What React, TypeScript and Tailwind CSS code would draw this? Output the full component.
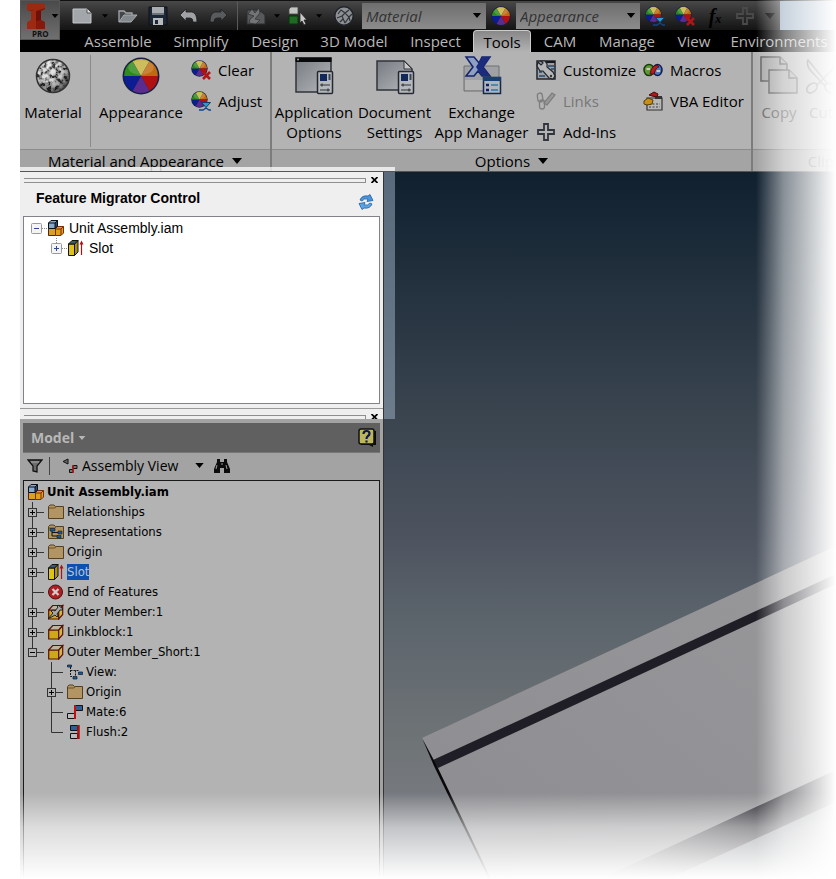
import { useState } from "react";
import type { ReactNode } from "react";

interface IconProps {
  className?: string;
}

interface TreeNode {
  label: string;
  icon: ReactNode;
  state?: "plus" | "minus";
  selected?: boolean;
  children?: TreeNode[];
}

/* ---------- icons ---------- */

function Caret({ className = "w-2.5 h-1.5" }: IconProps) {
  return (
    <svg viewBox="0 0 10 6" className={`shrink-0 ${className}`} fill="currentColor">
      <path d="M0 0h10L5 6z" />
    </svg>
  );
}

function WheelShape() {
  return (
    <>
      <circle cx="18" cy="18" r="17.5" fill="#15203f" />
      <path d="M18 18 10 4.1A16 16 0 0 1 26 4.1z" fill="#c3b23f" />
      <path d="M18 18 26 4.1A16 16 0 0 1 34 18z" fill="#c06a10" />
      <path d="M18 18H34A16 16 0 0 1 26 31.9z" fill="#b01010" />
      <path d="M18 18 26 31.9A16 16 0 0 1 10 31.9z" fill="#5a2c90" />
      <path d="M18 18 10 31.9A16 16 0 0 1 2 18z" fill="#0c1d94" />
      <path d="M18 18H2A16 16 0 0 1 10 4.1z" fill="#2f8a1c" />
      <ellipse cx="18" cy="10" rx="12" ry="7" fill="#fff" opacity=".16" />
    </>
  );
}

function WheelIcon({ className = "w-5 h-5" }: IconProps) {
  return (
    <svg viewBox="0 0 36 36" className={`shrink-0 ${className}`}>
      <WheelShape />
    </svg>
  );
}

function WheelClearIcon() {
  return (
    <svg viewBox="0 0 20 20" className="w-5 h-5 shrink-0">
      <g transform="scale(.47)">
        <WheelShape />
      </g>
      <path d="m12 12 7 7M19 12l-7 7" stroke="#b01414" strokeWidth="2.600" />
    </svg>
  );
}

function WheelAdjustIcon() {
  return (
    <svg viewBox="0 0 20 20" className="w-5 h-5 shrink-0">
      <g transform="scale(.47)">
        <WheelShape />
      </g>
      <path d="M10.500 11.500h9l-4.500 5z" fill="#2a9ad0" stroke="#0b3f70" />
      <path d="M8 19h4l3-2 3 2h2" fill="none" stroke="#12458a" strokeWidth="1.400" />
    </svg>
  );
}

function MaterialIcon({ className = "w-9 h-9" }: IconProps) {
  return (
    <svg viewBox="0 0 36 36" className={`shrink-0 ${className}`}>
      <defs>
        <clipPath id="ball">
          <circle cx="18" cy="18" r="16.5" />
        </clipPath>
        <radialGradient id="ballShade" cx="35%" cy="28%" r="75%">
          <stop offset="0" stopColor="#ddd" stopOpacity=".4" />
          <stop offset=".5" stopColor="#777" stopOpacity=".3" />
          <stop offset="1" stopColor="#000" stopOpacity=".75" />
        </radialGradient>
        <filter id="marble" x="0" y="0" width="100%" height="100%">
          <feTurbulence type="fractalNoise" baseFrequency=".24" numOctaves="3" seed="4" />
          <feColorMatrix values="3 0 0 0 -1.05  3 0 0 0 -1.05  3 0 0 0 -1.05  0 0 0 0 1" />
        </filter>
      </defs>
      <g clipPath="url(#ball)">
        <rect width="36" height="36" fill="#888" filter="url(#marble)" />
        <rect width="36" height="36" fill="url(#ballShade)" />
      </g>
      <circle cx="18" cy="18" r="16.5" fill="none" stroke="#333" strokeWidth="1.500" />
    </svg>
  );
}

function GlobeIcon() {
  return (
    <svg viewBox="0 0 20 20" className="w-5 h-5 shrink-0">
      <circle cx="10" cy="10" r="9.2" fill="#8d9196" stroke="#20242a" strokeWidth="1.500" />
      <path
        d="m4 8 3-4 4 3 4-3M3 12l5-2 3 7M8 10l3-3 4 4-4 6M15 11l3-3M6 16l3-3M15 11l1 4"
        stroke="#30353a"
        strokeWidth="1.200"
        fill="none"
      />
    </svg>
  );
}

function LogoIcon() {
  return (
    <svg viewBox="0 0 18 26" className="w-[18px] h-[26px]">
      <path d="M0 1 4 0h14v6l-4 2v10l4 1v7H0v-7l4-2V8L0 7z" fill="#9c2a12" />
      <path d="M9 8h5v10H9z" fill="#6e0f08" />
      <path d="M0 7l4 1h10l4-2v-1L9 8z" fill="#7a160b" />
      <path d="M9 18l5-1 4 2v7H9z" fill="#84190c" />
    </svg>
  );
}

function NewIcon() {
  return (
    <svg viewBox="0 0 20 16" className="w-5 h-4">
      <path d="M1 1h14l4 4v10H1z" fill="#a3a6aa" stroke="#c4c6c8" />
      <path d="M15 1v4h4" fill="#e0e0e0" stroke="#555" />
    </svg>
  );
}

function OpenIcon() {
  return (
    <svg viewBox="0 0 20 14" className="w-5 h-3.5">
      <path d="M1 13V2h5l2 2h6v2" fill="#43474c" stroke="#a4a8ac" strokeWidth="1.300" />
      <path d="m1 13 5-7h13l-6 7z" fill="#84898e" stroke="#a8acb0" />
    </svg>
  );
}

function SaveIcon() {
  return (
    <svg viewBox="0 0 20 20" className="w-5 h-5">
      <path d="M1 1h18v18H1z" fill="#1c2735" stroke="#0d1118" />
      <path d="M4 1h12v8H4z" fill="#a9acb0" />
      <path d="M5 12h10v7H5z" fill="#b8babd" />
      <path d="M7 14h3v4H7z" fill="#1c2735" />
      <path d="M4 7h12v2H4z" fill="#6d7278" />
    </svg>
  );
}

function UndoIcon({ className = "" }: IconProps) {
  return (
    <svg viewBox="0 0 19 14" className={`w-[19px] h-3.5 ${className}`}>
      <path d="M7 0v3h6q5 1 5 10h-4q0-4-3-4H7v3L1 6z" fill="currentColor" stroke="#1d2024" strokeWidth=".8" />
    </svg>
  );
}

function UpdateIcon() {
  return (
    <svg viewBox="0 0 20 18" className="w-5 h-[18px]">
      <path d="M1 3h12l6 5v9H1z" fill="#57595b" stroke="#2b2d2f" />
      <path d="M2 7l4-5 3 4 4-5 1 5-5 6 5 1-4 4-7-1 1-4 4-3z" fill="#727577" stroke="#333" strokeWidth=".8" />
    </svg>
  );
}

function SelectIcon() {
  return (
    <svg viewBox="0 0 20 18" className="w-5 h-[18px]">
      <path d="M1 2l2-2h7v7H1z" fill="#c2c5c2" stroke="#444" strokeWidth=".8" />
      <path d="M1 9h9v8H1z" fill="#1e6a22" stroke="#0d300f" />
      <path d="M12 5v11l2-2 2 4 2-1-2-4h3z" fill="#c9c9c9" stroke="#222" strokeWidth=".8" />
    </svg>
  );
}

function PlusIcon({ className = "text-[#30343c]" }: IconProps) {
  return (
    <svg viewBox="0 0 20 20" className={`w-5 h-5 shrink-0 ${className}`}>
      <path d="M8 2h4v6h6v4h-6v6H8v-6H2V8h6z" fill="none" stroke="currentColor" strokeWidth="1.800" />
    </svg>
  );
}

function SheetOverlay({ x }: { x: number }) {
  return (
    <g transform={`translate(${x} 15)`}>
      <rect x=".5" y=".5" width="15" height="22" rx="1" fill="#b4b9be" stroke="#252a31" strokeWidth="1.500" />
      <path d="M3 3h7v7H3z" fill="#10285c" />
      <path d="M11.500 3h2v6h-2z" fill="#3a4452" />
      <path d="M3 14h10M3 19h10M5 12.500v3M11 17.500v3" stroke="#333" strokeWidth="1.200" />
    </g>
  );
}

function AppOptionsIcon() {
  return (
    <svg viewBox="0 0 40 40" className="w-10 h-10">
      <defs>
        <linearGradient id="pane" x1="0" y1="0" x2="1" y2="1">
          <stop offset="0" stopColor="#777b82" />
          <stop offset="1" stopColor="#b5b7ba" />
        </linearGradient>
      </defs>
      <path d="M2 2h35v34H2z" fill="url(#pane)" stroke="#30343a" strokeWidth="1.500" />
      <path d="M1.500 1.500h36V6h-36z" fill="#08090b" />
      <circle cx="4" cy="3.500" r="1" fill="#aaa" />
      <SheetOverlay x={23} />
    </svg>
  );
}

function DocSettingsIcon() {
  return (
    <svg viewBox="0 0 40 40" className="w-10 h-10">
      <path d="M2 5h27l8 8v21H2z" fill="url(#pane)" stroke="#30343a" strokeWidth="1.500" />
      <path d="M29 5v8h8z" fill="#c8c8c8" stroke="#30343a" />
      <SheetOverlay x={23} />
    </svg>
  );
}

function ExchangeIcon() {
  return (
    <svg viewBox="0 0 40 40" className="w-10 h-10">
      <path d="M2 10h35v25H2z" fill="#9fa1a4" stroke="#6e7073" />
      <path d="M3 24h33v10H3z" fill="#b4b4b5" />
      <path d="M4 1h8l5 6 3-6h8l-7 10 7 9h-8l-4-5-4 5H4l7-9z" fill="#8f9fc4" stroke="#14246a" strokeWidth="1.500" />
      <path d="M20 1h8l-7 10 7 9h-8l-6-9z" fill="#1b2c7e" />
      <rect x="21.500" y="21.500" width="17" height="16" fill="#aeb6be" stroke="#15294a" strokeWidth="1.500" />
      <path d="M21 21h18v4H21z" fill="#1a3f70" />
      <path d="M24 29h3M24 34h3" stroke="#111d66" strokeWidth="2.500" />
      <path d="M29 29h7M29 34h7" stroke="#2a7cac" strokeWidth="1.500" />
    </svg>
  );
}

function CustomizeIcon() {
  return (
    <svg viewBox="0 0 20 20" className="w-5 h-5 shrink-0">
      <path d="M1 1h18v18H1z" fill="#9da1a6" stroke="#22262c" strokeWidth="1.500" />
      <path d="M9 1h10v2H9z" fill="#15181c" />
      <path d="M12 6h6M15 9h3M3 12h3M3 16h6" stroke="#24496e" strokeWidth="1.500" />
      <path
        d="M2 2l3 3 2-2-2-2h4l2 3v3l6 5 2 4-2 3-4-1-6-7H4L1 6z"
        fill="#b4b6b8"
        stroke="#22262c"
        strokeWidth="1.200"
      />
      <circle cx="15" cy="16" r="1.200" fill="#333" />
    </svg>
  );
}

function LinksIcon() {
  return (
    <svg viewBox="0 0 20 20" className="w-5 h-5 shrink-0" fill="none" stroke="#7e7e7e" strokeWidth="1.300">
      <rect x="1.500" y="2" width="5" height="9" rx="2.500" transform="rotate(-8 4 6)" />
      <rect x="3.500" y="9" width="5" height="9" rx="2.500" />
      <path d="M8 12 16 2l3 2-8 10z" fill="#999" />
    </svg>
  );
}

function MacrosIcon() {
  return (
    <svg viewBox="0 0 20 14" className="w-5 h-3.5 shrink-0">
      <ellipse cx="6" cy="7" rx="5" ry="5.500" fill="#5d9a34" stroke="#1b3a10" strokeWidth="1.500" />
      <ellipse cx="14.500" cy="7" rx="4.500" ry="5.500" fill="#4d78bc" stroke="#101c50" strokeWidth="1.500" />
      <path d="M7 11q1-8 7-9l2 2q-3 0-5 7z" fill="#b41d1d" stroke="#4a0808" strokeWidth=".8" />
      <path d="M3.500 6h3.500M13.500 8h3.500" stroke="#d0c8b8" strokeWidth="2" />
    </svg>
  );
}

function VbaIcon() {
  return (
    <svg viewBox="0 0 20 20" className="w-5 h-5 shrink-0">
      <path d="M4 7h15v12H4z" fill="#b8b8b8" stroke="#333" strokeWidth="1.200" />
      <path d="M12 5h7v3h-7z" fill="#333" />
      <path d="M6 13h11M6 16h11" stroke="#666" strokeWidth="1.500" strokeDasharray="2 1.500" />
      <path d="M6 4l5-3 4 2-1 3-5-1z" fill="#b01818" stroke="#4a0a0a" />
      <path d="M1 10l4-3 5 2-1 4-5 1-3-1z" fill="#c99018" stroke="#5b3c06" />
    </svg>
  );
}

function CopyIcon() {
  return (
    <svg viewBox="0 0 40 40" className="w-10 h-10" fill="#a8a8a8" stroke="#5c5c5c" strokeWidth="1.500">
      <path d="M2 1h19l7 7v17H2z" />
      <path d="M21 1v7h7" />
      <path d="M10 14h20l8 8v15H10z" />
      <path d="M30 14v8h8" />
    </svg>
  );
}

function CutIcon() {
  return (
    <svg viewBox="0 0 40 40" className="w-10 h-10" fill="none" stroke="#5c5c5c" strokeWidth="1.500">
      <path d="M7 4q-2 6 3 11l14 15 2-3L7 4zM33 4q2 6-3 11L15 30" />
      <ellipse cx="11" cy="32" rx="6" ry="4" transform="rotate(-40 11 32)" />
      <ellipse cx="29" cy="32" rx="6" ry="4" transform="rotate(40 29 32)" />
    </svg>
  );
}

function AssemblyIcon() {
  return (
    <svg viewBox="0 0 16 16" className="w-4 h-4 shrink-0">
      <path d="M.5 8.500h7v7h-7z" fill="#d9a21c" stroke="#5a1f08" />
      <path d="M7.500 8.500l2-2h6v6.500l-2.500 2.500H7.500z" fill="#e0a01e" stroke="#7a2b0c" />
      <path d="M7.500 9h5.500v6M13 9l2.500-2.500" stroke="#7a2b0c" fill="none" />
      <path d="M.5 3 3 .5h6.500v5.500L7 8.500H.5z" fill="#8aa9c8" stroke="#0b0f18" />
      <path d="M7 3l2.500-2.500v5.500L7 8.500z" fill="#2b4a70" stroke="#0b0f18" />
      <path d="M.5 3H7" stroke="#0b0f18" fill="none" />
    </svg>
  );
}

function SlotIcon() {
  return (
    <svg viewBox="0 0 16 16" className="w-4 h-4 shrink-0">
      <path d="M.5 4h6v11.500h-6z" fill="#e0c414" stroke="#151206" />
      <path d="M6.500 4l3.500-3.500v11.500l-3.500 3.500z" fill="#a88f08" stroke="#151206" />
      <path d="M.5 4 4 .5h6L6.500 4z" fill="#3d5878" stroke="#151206" />
      <path d="M13.500 15V3" stroke="#b01010" strokeWidth="1.200" />
      <path d="M11.500 4.500l2-4 2 4z" fill="#b01010" />
    </svg>
  );
}

function FolderIcon({ branch = false }: { branch?: boolean }) {
  return (
    <svg viewBox="0 0 16 16" className="w-4 h-4 shrink-0">
      <path d="M.5 14.500v-12l1.500-1.500h4l1.500 1.500h8v12z" fill="#b39564" stroke="#53401f" />
      <path d="M1 4h6l1-1.500" stroke="#6b5127" fill="none" />
      {branch && (
        <>
          <path d="M4 5v7h6M4 8.500h6" stroke="#111" fill="none" />
          <path d="M2 4.500h5v2.500H2zM10 7h4v3h-4zM9 11.500h4V14H9z" fill="#1f5a92" stroke="#0d1b30" strokeWidth=".6" />
        </>
      )}
    </svg>
  );
}

function EndIcon() {
  return (
    <svg viewBox="0 0 16 16" className="w-4 h-4 shrink-0">
      <circle cx="7.500" cy="8" r="7" fill="#b01e22" stroke="#4c1012" />
      <path d="m4.500 5 6 6M10.500 5l-6 6" stroke="#cfcfcf" strokeWidth="2.200" />
    </svg>
  );
}

function PartIcon({ pinned = false }: { pinned?: boolean }) {
  return (
    <svg viewBox="0 0 16 16" className="w-4 h-4 shrink-0">
      <path d="M.7 6h10v9H.7z" fill="#cfa818" stroke="#5a1208" strokeWidth="1.200" />
      <path d="M10.700 6l4-4.500v9l-4 4.500z" fill="#d8b63a" stroke="#5a1208" strokeWidth="1.200" />
      <path d="M.7 6l4-4.500h10L10.700 6z" fill="#b9b4a4" stroke="#5a1208" strokeWidth="1.200" />
      {pinned && (
        <path
          d="m0 15 5-6-2-2 2-1 2 1 3-4-1-1 1-1 5 4-1 1h-2l-3 4 1 2-1 1-2-2z"
          fill="#a6a6a6"
          stroke="#151515"
          strokeWidth=".9"
        />
      )}
    </svg>
  );
}

function ViewIcon() {
  return (
    <svg viewBox="0 0 16 16" className="w-4 h-4 shrink-0">
      <path d="M3.500 3v9.500H6M3.500 6.500h8M8.500 6.500v6" stroke="#161616" strokeDasharray="2 1" fill="none" />
      <path d="M.5 1h4v2h-4zM11.500 8h4v2.500h-4zM6 12.500h4V15H6z" fill="#1f5a92" stroke="#0d1b30" strokeWidth=".7" />
    </svg>
  );
}

function MateIcon() {
  return (
    <svg viewBox="0 0 16 16" className="w-4 h-4 shrink-0">
      <path d="M8.500 1.500h7v5h-7z" fill="#2d5f94" stroke="#111" />
      <path d="M.5 9.500h7v5h-7z" fill="#bcbcbc" stroke="#111" />
      <path d="M8 1v14" stroke="#c01010" strokeWidth="2" />
    </svg>
  );
}

function FlushIcon() {
  return (
    <svg viewBox="0 0 16 16" className="w-4 h-4 shrink-0">
      <path d="M3.500 1.500h7v5h-7z" fill="#2d5f94" stroke="#111" />
      <path d="M3.500 9.500h7v5h-7z" fill="#bcbcbc" stroke="#111" />
      <path d="M11.500 1v14" stroke="#b01010" strokeWidth="2.500" />
    </svg>
  );
}

function RefreshIcon() {
  return (
    <svg viewBox="0 0 16 16" className="w-4 h-4">
      <path d="M2 6q2-5 8-4l2-1.500 3 6-6 1 1-2.500Q6 4 4 7z" fill="#4a94dc" stroke="#1f5f9f" strokeWidth=".8" />
      <path d="M14 10q-2 5-8 4l-2 1.500-3-6 6-1-1 2.500q4 1 6-2z" fill="#5aa4e8" stroke="#1f5f9f" strokeWidth=".8" />
    </svg>
  );
}

function FilterIcon() {
  return (
    <svg viewBox="0 0 16 14" className="w-4 h-3.5 shrink-0">
      <path d="M1 1h14l-5 6v6l-4-1V7z" fill="#6c6c6c" stroke="#111" strokeWidth="1.300" />
      <path d="M4 3h8" stroke="#a8a8a8" />
    </svg>
  );
}

function AssemblyViewIcon() {
  return (
    <svg viewBox="0 0 16 16" className="w-4 h-4 shrink-0">
      <path d="M1 3.500 6 1v5z" fill="#666" stroke="#111" />
      <path d="M11 7.500h4v3h-4zM7.500 11.500h3.500v3H7.500z" fill="#777" stroke="#111" />
      <path d="M11 7v8" stroke="#b01010" strokeWidth="1.500" />
    </svg>
  );
}

function BinocularsIcon() {
  return (
    <svg viewBox="0 0 16 14" className="w-4 h-3.5">
      <path d="M3 0h3v3h4V0h3v3l3 7v4h-6V9H6v5H0v-4l3-7z" fill="#0c0c0c" />
      <path d="M3 6l-1 4M12 6l1 4M7 5h2" stroke="#999" />
    </svg>
  );
}

function HelpIcon() {
  return (
    <svg viewBox="0 0 18 19" className="w-[18px] h-[19px]">
      <path d="M3 3h15v14h-3v2l-4-2H3z" fill="#0c0c0c" />
      <rect x="1" y="1" width="15" height="15" rx="2" fill="#bdb75a" stroke="#111" strokeWidth="1.500" />
      <path d="M5.500 6q0-3 3-3t3 2.500q0 1.500-1.500 2.500T8.500 11M8.500 12.500v2" fill="none" stroke="#10125a" strokeWidth="2.200" />
    </svg>
  );
}

/* ---------- top bars ---------- */

function ToolButton({ label, className, children }: { label: string; className: string; children: ReactNode }) {
  return (
    <button type="button" aria-label={label} className={`flex h-full shrink-0 items-center justify-center ${className}`}>
      {children}
    </button>
  );
}

function Combo({ label }: { label: string }) {
  return (
    <div className="relative flex h-[26px] w-[124px] shrink-0 items-center bg-linear-to-b from-[#6e6e6e] to-[#8c8c8c]">
      <select aria-label={label} className="h-full w-full appearance-none px-1 text-[15px] leading-5 italic text-[#333]">
        <option>{label}</option>
      </select>
      <Caret className="pointer-events-none absolute right-1 h-[5px] w-2.5 text-black" />
    </div>
  );
}

const tabs = [
  { name: "Assemble", width: "w-[88px]" },
  { name: "Simplify", width: "w-[78px]" },
  { name: "Design", width: "w-[70px]" },
  { name: "3D Model", width: "w-[88px]" },
  { name: "Inspect", width: "w-[75px]" },
  { name: "Tools", width: "w-[58px]" },
  { name: "CAM", width: "w-[58px]" },
  { name: "Manage", width: "w-[76px]" },
  { name: "View", width: "w-[58px]" },
  { name: "Environments", width: "w-[112px]" },
];

function TopBar() {
  const [active, setActive] = useState("Tools");

  return (
    <header className="flex bg-black">
      <button
        type="button"
        className="flex h-10 w-10 shrink-0 flex-col items-center border border-[#555] bg-linear-to-b from-[#4a4a4a] to-[#707070] pt-0.5"
      >
        <span className="flex items-center gap-1.5 pl-1.5">
          <LogoIcon />
          <Caret className="h-1 w-2 text-black" />
        </span>
        <span className="self-start pl-[11px] text-[8px] leading-[10px] font-bold text-[#111]">PRO</span>
      </button>
      <div className="min-w-0 flex-1">
        <div className="flex h-[30px] overflow-hidden border-t border-[#111] bg-[#94a9bf]">
          <div className="flex shrink-0 items-center bg-linear-to-b from-[#484848] to-[#141414]">
            <ToolButton label="New" className="w-11"><NewIcon /></ToolButton>
            <Caret className="mr-2 -ml-0.5 h-1 w-1.5 text-black" />
            <ToolButton label="Open" className="w-6"><OpenIcon /></ToolButton>
            <ToolButton label="Save" className="w-9"><SaveIcon /></ToolButton>
            <ToolButton label="Undo" className="w-6 text-[#a0a2a5]"><UndoIcon /></ToolButton>
            <ToolButton label="Redo" className="w-9 text-[#585a5c]"><UndoIcon className="-scale-x-100" /></ToolButton>
            <span className="mr-1.5 ml-px h-full w-px bg-[#5a5a5a]" />
            <ToolButton label="Update" className="w-6"><UpdateIcon /></ToolButton>
            <Caret className="mx-1.5 h-1 w-1.5 text-black" />
            <ToolButton label="Select" className="w-6"><SelectIcon /></ToolButton>
            <Caret className="mr-1 ml-1.5 h-1 w-1.5 text-black" />
            <ToolButton label="Material browser" className="w-9"><GlobeIcon /></ToolButton>
            <Combo label="Material" />
            <ToolButton label="Appearance browser" className="w-[30px]"><WheelIcon /></ToolButton>
            <Combo label="Appearance" />
            <ToolButton label="Adjust" className="w-[30px]"><WheelAdjustIcon /></ToolButton>
            <ToolButton label="Clear" className="w-[30px]"><WheelClearIcon /></ToolButton>
            <ToolButton
              label="Parameters"
              className="w-[30px] font-[Liberation_Serif,serif] text-xl leading-5 font-bold italic text-black"
            >
              f<sub className="text-xs">x</sub>
            </ToolButton>
            <ToolButton label="Add" className="w-[30px]"><PlusIcon className="text-[#4a4a4a]" /></ToolButton>
            <ToolButton label="More" className="w-5"><Caret className="h-2 w-2.5 text-black" /></ToolButton>
          </div>
        </div>
        <nav className="flex h-[22px] overflow-hidden pl-3.5">
          {tabs.map((tab) => (
            <button
              key={tab.name}
              type="button"
              onClick={() => setActive(tab.name)}
              className={`shrink-0 ${tab.width} text-[15px] leading-5 ${
                active === tab.name
                  ? "rounded-t-sm border-x border-t border-[#ccc] bg-linear-to-b from-[#888] to-[#b3b3b3] text-black"
                  : "text-[#b8b8b8]"
              }`}
            >
              {tab.name}
            </button>
          ))}
        </nav>
      </div>
    </header>
  );
}

function BigButton({ icon, lines, className }: { icon: ReactNode; lines: string[]; className: string }) {
  return (
    <button type="button" className={`flex shrink-0 flex-col items-center pt-0.5 ${className}`}>
      <span className="flex h-10 items-center">{icon}</span>
      <span className="mt-1.5 text-[15px] leading-5 whitespace-nowrap">
        {lines.map((line) => (
          <span key={line} className="block">{line}</span>
        ))}
      </span>
    </button>
  );
}

function SmallButton({ icon, label, disabled = false }: { icon: ReactNode; label: string; disabled?: boolean }) {
  return (
    <button
      type="button"
      disabled={disabled}
      className="flex h-[31px] items-center gap-[7px] text-[15px] leading-5 whitespace-nowrap disabled:text-[#777]"
    >
      {icon}
      {label}
    </button>
  );
}

function RibbonGroup({ title, className, titleClass = "justify-center", caret = true, children }: {
  title: string;
  className: string;
  titleClass?: string;
  caret?: boolean;
  children: ReactNode;
}) {
  return (
    <section className={`flex flex-col border-r-2 border-[#7c7c7c] ${className}`}>
      <div className="flex h-[97px] pt-0.5">{children}</div>
      <h2 className={`flex h-[22px] items-center gap-2 border-t border-[#8c8c8c] bg-[#a4a4a4] text-[15px] leading-5 whitespace-nowrap ${titleClass}`}>
        {title}
        {caret && <Caret />}
      </h2>
    </section>
  );
}

function Ribbon() {
  return (
    <div className="relative flex overflow-hidden border-b border-[#555] bg-[#b3b3b3] text-black">
      <RibbonGroup title="Material and Appearance" className="w-[252px] shrink-0">
        <BigButton icon={<MaterialIcon />} lines={["Material"]} className="w-[66px]" />
        <span className="mt-px ml-1 h-[92px] w-px bg-[#8a8a8a]" />
        <BigButton icon={<WheelIcon className="h-[38px] w-[38px]" />} lines={["Appearance"]} className="w-[100px]" />
        <div className="flex flex-col">
          <SmallButton icon={<WheelClearIcon />} label="Clear" />
          <SmallButton icon={<WheelAdjustIcon />} label="Adjust" />
        </div>
      </RibbonGroup>
      <RibbonGroup title="Options" className="w-[481px] shrink-0">
        <BigButton icon={<AppOptionsIcon />} lines={["Application", "Options"]} className="w-[84px]" />
        <BigButton icon={<DocSettingsIcon />} lines={["Document", "Settings"]} className="w-[77px]" />
        <BigButton icon={<ExchangeIcon />} lines={["Exchange", "App Manager"]} className="w-[97px]" />
        <div className="flex w-[107px] flex-col pl-1.5">
          <SmallButton icon={<CustomizeIcon />} label="Customize" />
          <SmallButton icon={<LinksIcon />} label="Links" disabled />
          <SmallButton icon={<PlusIcon />} label="Add-Ins" />
        </div>
        <div className="flex flex-col pl-1.5">
          <SmallButton icon={<MacrosIcon />} label="Macros" />
          <SmallButton icon={<VbaIcon />} label="VBA Editor" />
        </div>
      </RibbonGroup>
      <RibbonGroup
        title="Clip"
        className="min-w-0 flex-1 overflow-hidden text-[#5c5c5c]"
        titleClass="justify-end"
        caret={false}
      >
        <BigButton icon={<CopyIcon />} lines={["Copy"]} className="w-[52px]" />
        <BigButton icon={<CutIcon />} lines={["Cut"]} className="w-8" />
      </RibbonGroup>
      <div className="pointer-events-none absolute bottom-0 left-0 h-1 w-[375px] bg-white/75" />
    </div>
  );
}

/* ---------- dock ---------- */

function Gripper({ label }: { label: string }) {
  return (
    <div className="flex h-4 items-center gap-0.5 pl-px">
      <span className="h-[5px] flex-1 border-y border-r border-[#8f8f8f]" />
      <button type="button" aria-label={label} className="flex h-3 w-3 items-center justify-center">
        <svg viewBox="0 0 7 6" className="h-1.5 w-[7px]" stroke="#000" strokeWidth="1.700">
          <path d="m.5 0 6 6M6.500 0l-6 6" />
        </svg>
      </button>
    </div>
  );
}

function MigratorExpander({ open }: { open: boolean }) {
  return (
    <svg viewBox="0 0 17 20" className="h-5 w-[17px] shrink-0" fill="none">
      <path d="M11 10.500h6" stroke="#888" strokeDasharray="1 1" />
      {!open && <path d="M5.500 0v5" stroke="#888" strokeDasharray="1 1" />}
      <rect x=".5" y="5.500" width="10" height="10" rx="1" fill="#f4f4f4" stroke="#9a9a9a" />
      <path d={open ? "M3 10.500h5" : "M3 10.500h5M5.500 8v5"} stroke="#2c4a9c" />
    </svg>
  );
}

function MigratorPanel() {
  return (
    <section className="bg-[#efefef] px-[3px] pb-1 font-[Liberation_Sans,Arial,sans-serif] text-black">
      <Gripper label="Close Feature Migrator" />
      <div className="flex h-7 items-start justify-between pr-1.5 pl-[13px]">
        <h2 className="text-sm leading-5 font-bold">Feature Migrator Control</h2>
        <button type="button" aria-label="Refresh" className="mt-1.5"><RefreshIcon /></button>
      </div>
      <ul className="h-[188px] border border-[#82828a] bg-white pt-px text-sm leading-5">
        <li>
          <div className="flex h-5 items-center pl-[7px]">
            <MigratorExpander open />
            <AssemblyIcon />
            <span className="pl-[5px]">Unit Assembly.iam</span>
          </div>
          <ul>
            <li className="flex h-5 items-center pl-[27px]">
              <MigratorExpander open={false} />
              <SlotIcon />
              <span className="pl-[5px]">Slot</span>
            </li>
          </ul>
        </li>
      </ul>
    </section>
  );
}

const modelTree: TreeNode[] = [
  { label: "Relationships", icon: <FolderIcon />, state: "plus" },
  { label: "Representations", icon: <FolderIcon branch />, state: "plus" },
  { label: "Origin", icon: <FolderIcon />, state: "plus" },
  { label: "Slot", icon: <SlotIcon />, state: "plus", selected: true },
  { label: "End of Features", icon: <EndIcon /> },
  { label: "Outer Member:1", icon: <PartIcon pinned />, state: "plus" },
  { label: "Linkblock:1", icon: <PartIcon />, state: "plus" },
  {
    label: "Outer Member_Short:1",
    icon: <PartIcon />,
    state: "minus",
    children: [
      { label: "View:", icon: <ViewIcon /> },
      { label: "Origin", icon: <FolderIcon />, state: "plus" },
      { label: "Mate:6", icon: <MateIcon /> },
      { label: "Flush:2", icon: <FlushIcon /> },
    ],
  },
];

function Connector({ state, last }: { state?: "plus" | "minus"; last: boolean }) {
  return (
    <svg viewBox="0 0 20 20" className="h-5 w-5 shrink-0" fill="none" stroke="#333">
      <path d={last ? "M4.500 0v10.500H16" : "M4.500 0v20M4.500 10.500H16"} />
      {state && <rect x=".5" y="6.500" width="8" height="8" fill="#b3b3b3" />}
      {state && <path d={state === "plus" ? "M2 10.500h5M4.500 8v5" : "M2 10.500h5"} stroke="#000" />}
    </svg>
  );
}

function TreeList({ nodes, className }: { nodes: TreeNode[]; className: string }) {
  return (
    <ul className={className}>
      {nodes.map((node, i) => (
        <li key={node.label}>
          <div className="flex h-5 items-center">
            <Connector state={node.state} last={i === nodes.length - 1} />
            {node.icon}
            <span className={`ml-[3px] h-4 leading-4 ${node.selected ? "bg-[#0d50b0] text-[#b8c4d4]" : ""}`}>{node.label}</span>
          </div>
          {node.children && <TreeList nodes={node.children} className="pl-[19px]" />}
        </li>
      ))}
    </ul>
  );
}

function ModelPanel() {
  return (
    <section className="flex flex-1 flex-col bg-[#a3a3a3] px-[3px] text-black">
      <div className="mt-1 flex h-[30px] items-center justify-between border-b border-[#777] bg-[#606060] pr-1 pl-2">
        <button type="button" className="flex items-center gap-1 text-sm font-bold text-[#b8b8b8]">
          Model
          <Caret className="h-1 w-2" />
        </button>
        <button type="button" aria-label="Help"><HelpIcon /></button>
      </div>
      <div className="flex h-[27px] items-center pb-0.5 pl-1">
        <button type="button" aria-label="Filter"><FilterIcon /></button>
        <span className="mr-3 ml-1.5 h-[18px] w-px bg-[#444]" />
        <AssemblyViewIcon />
        <div className="relative flex w-[132px] items-center">
          <select aria-label="Browser view" className="w-full appearance-none pl-1 text-sm leading-5">
            <option>Assembly View</option>
            <option>Modeling View</option>
          </select>
          <Caret className="pointer-events-none absolute right-1.5 h-[5px] w-[9px]" />
        </div>
        <button type="button" aria-label="Find" className="ml-1"><BinocularsIcon /></button>
      </div>
      <div className="flex-1 border-x border-t border-[#1a1a1a] bg-[#b3b3b3] pt-px pl-1 font-[DejaVu_Sans_Condensed,DejaVu_Sans,sans-serif] text-[13px]">
        <div className="flex h-5 items-center gap-[3px] font-bold">
          <AssemblyIcon />
          Unit Assembly.iam
        </div>
        <TreeList nodes={modelTree} className="" />
      </div>
    </section>
  );
}

/* ---------- model view ---------- */

function Viewport() {
  return (
    <main className="relative min-w-0 flex-1 overflow-hidden bg-[linear-gradient(#10202f,#39444f_34%,#4c535f_51%,#5f676e_66%,#6f7476_81%,#76797f_88%,#7d8288)]">
      <svg viewBox="0 0 452 707" preserveAspectRatio="xMinYMin slice" className="absolute inset-0 h-full w-full">
        <defs>
          <linearGradient id="slab" x1="0" y1="1" x2="1" y2="0">
            <stop offset="0" stopColor="#8d8c90" />
            <stop offset="1" stopColor="#98989b" />
          </linearGradient>
          <linearGradient id="edge" x1="0" y1="0" x2="1" y2="0">
            <stop offset="0" stopColor="#808084" />
            <stop offset=".65" stopColor="#24242b" />
            <stop offset="1" stopColor="#24242b" />
          </linearGradient>
        </defs>
        <path d="M38 566 452 374V598L218 707H106z" fill="url(#slab)" />
        <path d="M49 588 452 402v10L54 596z" fill="#1f1e26" />
        <path d="M452 598 216 707h68L452 630z" fill="url(#edge)" />
        <path d="m38 566 15 28 54 113h-2L50 594z" fill="#08080a" />
      </svg>
      <div className="pointer-events-none absolute top-0 left-0 h-[247px] w-[11px] bg-[#9fb4c8]/50" />
    </main>
  );
}

export default function App() {
  return (
    <div className="relative flex min-h-screen flex-col overflow-hidden bg-white pl-5 font-[Open_Sans,Noto_Sans,sans-serif]">
      <TopBar />
      <Ribbon />
      <div className="flex flex-1">
        <aside className="flex w-[364px] shrink-0 flex-col border-r border-[#333]">
          <MigratorPanel />
          <div className="h-[11px] overflow-hidden border-t border-[#999] bg-[#efefef] px-[3px]">
            <Gripper label="Close Model" />
          </div>
          <ModelPanel />
        </aside>
        <Viewport />
      </div>
      <div className="pointer-events-none absolute inset-y-0 right-0 w-20 bg-linear-to-r from-white/0 via-white/50 via-35% to-white" />
      <div className="pointer-events-none absolute inset-x-0 bottom-0 h-[86px] bg-linear-to-b from-white/0 via-white/55 via-40% to-white" />
    </div>
  );
}
